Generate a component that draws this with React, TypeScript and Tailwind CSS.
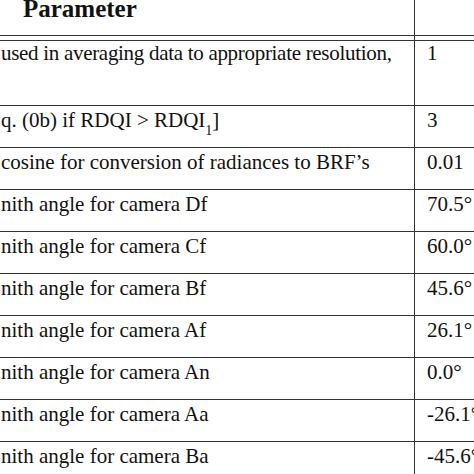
const rows: { param: React.ReactNode; value: string; tall?: boolean }[] = [
  { param: "used in averaging data to appropriate resolution,", value: "1", tall: true },
  {
    param: (
      <>
        q. (0b) if RDQI &gt; RDQI<sub className="text-[14px] align-[-5px]">1</sub>]
      </>
    ),
    value: "3",
  },
  { param: "cosine for conversion of radiances to BRF\u2019s", value: "0.01" },
  { param: "nith angle for camera Df", value: "70.5°" },
  { param: "nith angle for camera Cf", value: "60.0°" },
  { param: "nith angle for camera Bf", value: "45.6°" },
  { param: "nith angle for camera Af", value: "26.1°" },
  { param: "nith angle for camera An", value: "0.0°" },
  { param: "nith angle for camera Aa", value: "-26.1°" },
  { param: "nith angle for camera Ba", value: "-45.6°" },
]

export default function App() {
  return (
    <div
      className="w-[474px] h-[474px] overflow-hidden bg-white text-[#111]"
      style={{ fontFamily: '"Liberation Serif", "Times New Roman", serif' }}
    >
      {/* header */}
      <div className="flex h-[35px]">
        <div className="w-[415px] shrink-0 border-r-[1.5px] border-[#333] pl-[23px]">
          <span className="block text-[25px] font-bold leading-[24px] -mt-[3px]">Parameter</span>
        </div>
        <div className="flex-1" />
      </div>

      {/* double rule */}
      <div className="flex h-[6px] border-y-[1.5px] border-[#333]">
        <div className="w-[415px] shrink-0 border-r-[1.5px] border-[#333]" />
      </div>

      {rows.map((row, i) => (
        <div
          key={i}
          className={`flex border-b-[1.5px] border-[#333] whitespace-nowrap text-[21px] leading-[22px] ${
            row.tall ? "h-[64.5px]" : "h-[42px]"
          }`}
        >
          <div
            className={`w-[415px] shrink-0 overflow-hidden border-r-[1.5px] border-[#333] pl-[1px] ${
              row.tall ? "pt-[1px] tracking-[-0.3px]" : "pt-[3px]"
            }`}
          >
            {row.param}
          </div>
          <div className={`flex-1 pl-[12px] ${row.tall ? "pt-[1px]" : "pt-[3px]"}`}>{row.value}</div>
        </div>
      ))}
    </div>
  )
}
